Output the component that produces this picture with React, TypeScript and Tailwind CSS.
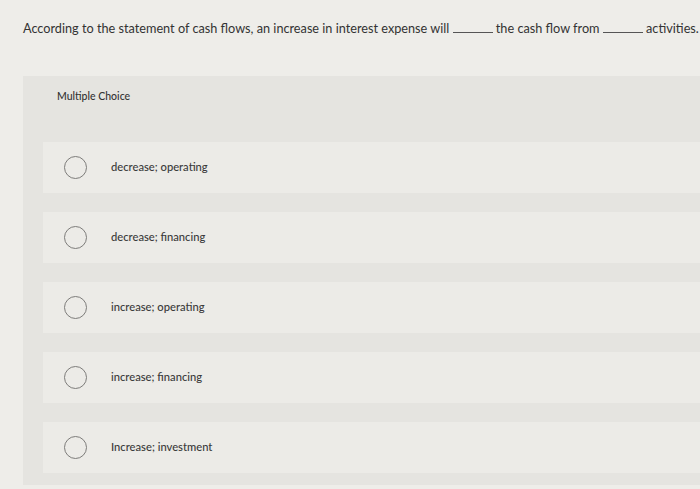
const options = [
  "decrease; operating",
  "decrease; financing",
  "increase; operating",
  "increase; financing",
  "Increase; investment",
];

function Radio() {
  return (
    <span className="block w-[23px] h-[23px] rounded-full border-[1.5px] border-[#7d7c7a] shrink-0" />
  );
}

export default function App() {
  return (
    <div
      className="w-[700px] h-[489px] overflow-hidden bg-[#eeede9] text-[#333] flex flex-col"
      style={{ fontFamily: "Lato, 'Open Sans', sans-serif" }}
    >
      <p className="pl-[23px] pt-[19px] text-[12.7px] leading-[18px] whitespace-nowrap">
        According to the statement of cash flows, an increase in interest expense will{" "}
        <span className="inline-block w-[40px] border-b border-[#555]" /> the cash flow
        from <span className="inline-block w-[40px] border-b border-[#555]" /> activities.
      </p>

      <div className="ml-[23px] mt-[39px] bg-[#e5e4e0] pb-[12px]">
        <div className="pl-[34px] pt-[13px] h-[66px] text-[10.5px] font-medium text-[#333]">
          Multiple Choice
        </div>
        <div className="flex flex-col gap-[19px] pl-[20px]">
          {options.map((o) => (
            <div key={o} className="h-[51px] bg-[#ecebe7] flex items-center pl-[21px]">
              <Radio />
              <span className="ml-[24px] text-[11.2px] font-medium text-[#3a3a3a]">{o}</span>
            </div>
          ))}
        </div>
      </div>
    </div>
  );
}
